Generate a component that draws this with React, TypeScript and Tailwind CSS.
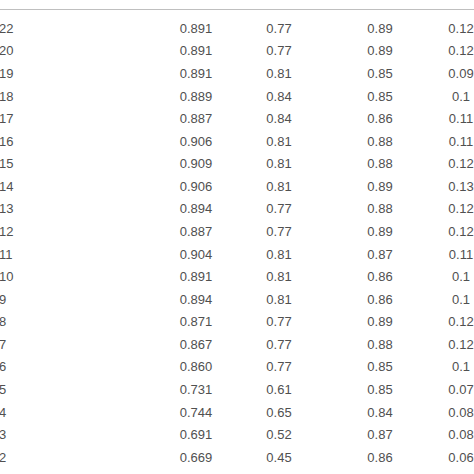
const rows: [string, string, string, string, string][] = [
  ["22", "0.891", "0.77", "0.89", "0.12"],
  ["20", "0.891", "0.77", "0.89", "0.12"],
  ["19", "0.891", "0.81", "0.85", "0.09"],
  ["18", "0.889", "0.84", "0.85", "0.1"],
  ["17", "0.887", "0.84", "0.86", "0.11"],
  ["16", "0.906", "0.81", "0.88", "0.11"],
  ["15", "0.909", "0.81", "0.88", "0.12"],
  ["14", "0.906", "0.81", "0.89", "0.13"],
  ["13", "0.894", "0.77", "0.88", "0.12"],
  ["12", "0.887", "0.77", "0.89", "0.12"],
  ["11", "0.904", "0.81", "0.87", "0.11"],
  ["10", "0.891", "0.81", "0.86", "0.1"],
  ["9", "0.894", "0.81", "0.86", "0.1"],
  ["8", "0.871", "0.77", "0.89", "0.12"],
  ["7", "0.867", "0.77", "0.88", "0.12"],
  ["6", "0.860", "0.77", "0.85", "0.1"],
  ["5", "0.731", "0.61", "0.85", "0.07"],
  ["4", "0.744", "0.65", "0.84", "0.08"],
  ["3", "0.691", "0.52", "0.87", "0.08"],
  ["2", "0.669", "0.45", "0.86", "0.06"],
];

export default function App() {
  return (
    <div className="w-[474px] h-[474px] overflow-hidden bg-white font-['Liberation_Sans',Arial,sans-serif] text-[13px] text-[#505050]">
      <div className="mt-[9px] h-px bg-[#bfbfbf]" />
      <div className="pt-[7px]">
        {rows.map((r) => (
          <div
            key={r[0]}
            className="grid grid-cols-[150px_92px_74px_128px_34px] h-[22.58px] items-center leading-none"
          >
            <span className="-ml-px">{r[0]}</span>
            <span className="text-center">{r[1]}</span>
            <span className="text-center">{r[2]}</span>
            <span className="text-center">{r[3]}</span>
            <span className="text-center whitespace-nowrap">{r[4]}</span>
          </div>
        ))}
      </div>
    </div>
  );
}
